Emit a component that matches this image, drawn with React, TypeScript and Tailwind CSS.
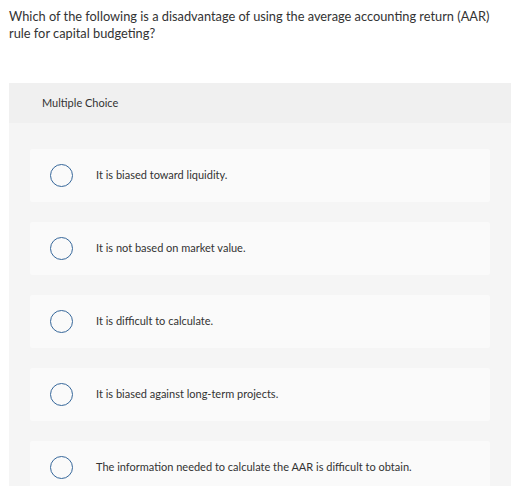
const options = [
  "It is biased toward liquidity.",
  "It is not based on market value.",
  "It is difficult to calculate.",
  "It is biased against long-term projects.",
  "The information needed to calculate the AAR is difficult to obtain.",
];

export default function App() {
  return (
    <div
      className="w-[518px] h-[486px] overflow-hidden bg-white text-[#333]"
      style={{ fontFamily: "Lato, 'Open Sans', sans-serif" }}
    >
      <p className="px-[9px] pt-[8px] text-[12.8px] leading-[17px]">
        Which of the following is a disadvantage of using the average accounting return (AAR) rule
        for capital budgeting?
      </p>

      <div className="mx-[9px] mt-[41px] w-[502px] bg-[#f5f5f5] rounded-t-[2px]">
        <div className="h-[40px] bg-[#f0f0f0] flex items-center pl-[33px] text-[11px]">
          Multiple Choice
        </div>
        <div className="px-[21px] pt-[26px] flex flex-col gap-[20px]">
          {options.map((o) => (
            <div
              key={o}
              className="h-[53px] bg-[#fafafa] rounded-[2px] flex items-center pl-[20px]"
            >
              <span className="w-[23px] h-[23px] rounded-full border-[1.5px] border-[#36679a] shrink-0" />
              <span className="ml-[23px] text-[11px]">{o}</span>
            </div>
          ))}
        </div>
      </div>
    </div>
  );
}
